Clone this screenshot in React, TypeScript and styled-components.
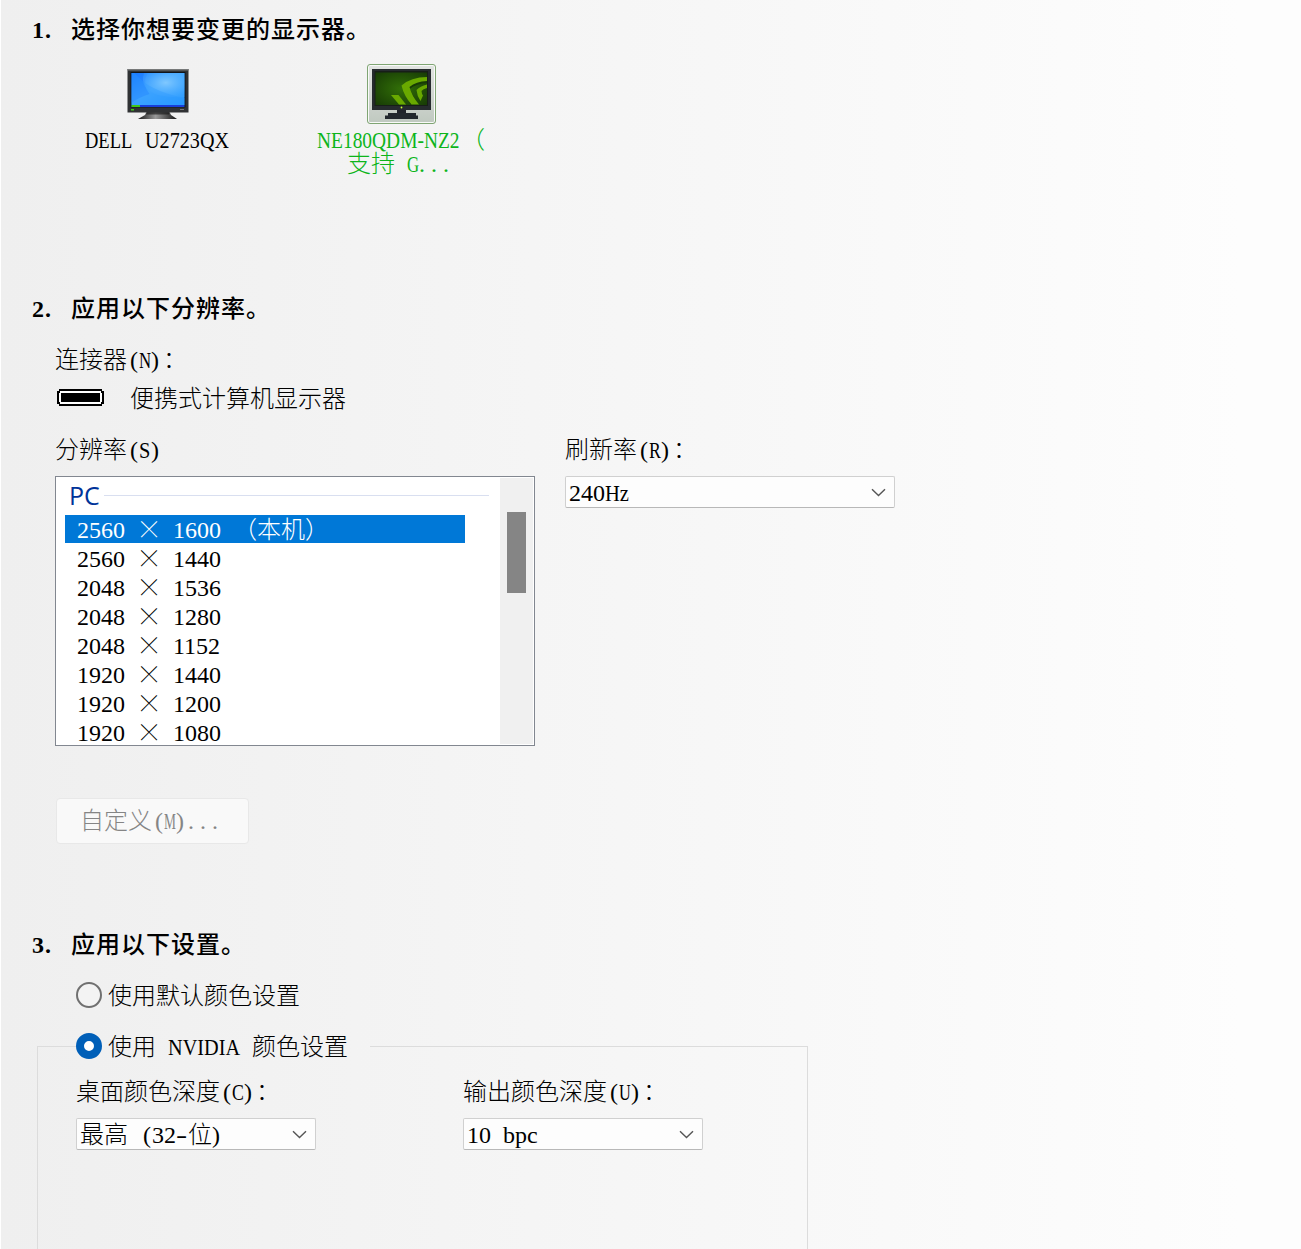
import React, { useState } from "react";
import styled, { createGlobalStyle, css } from "styled-components";

const GlobalStyle = createGlobalStyle`
  * { box-sizing: border-box; }
  body {
    margin: 0;
    background: #f0f0f0;
  }
`;

const Page = styled.main`
  width: 1301px;
  height: 1249px;
  overflow: hidden;
  border-left: 1px solid #fff;
  background: linear-gradient(90deg, #efefef 0, #fdfdfd 1240px);
  color: #000;
  font: 300 24px/24px "Liberation Serif", "Noto Sans CJK SC", serif;
  word-spacing: 6px;
  white-space: nowrap;
`;

const Section = styled.section<{ $height: number; $top?: number }>`
  height: ${(p) => p.$height}px;
  padding-top: ${(p) => p.$top ?? 0}px;
`;

const Heading = styled.h2`
  margin: 0 0 0 31px;
  display: flex;
  font-size: 24px;
  line-height: 26px;
  font-weight: 500;
  letter-spacing: 1px;
`;

const Step = styled.span`
  width: 39px;
  font-weight: 700;
`;

/* Half-width run: every character takes a 12px cell. */
const Half = styled.span<{ $cells: number; $scale?: number; $track?: number; $pad?: number }>`
  display: inline-block;
  width: ${(p) => p.$cells * 12}px;
  padding-left: ${(p) => p.$pad ?? 0}px;
  text-align: left;
  letter-spacing: ${(p) => p.$track ?? 0}px;
  transform: scaleX(${(p) => p.$scale ?? 1});
  transform-origin: 0 50%;
`;

const Displays = styled.div`
  display: flex;
  gap: 76px;
  margin: 21px 0 0 72px;
`;

const Display = styled.div<{ $active?: boolean }>`
  width: 168px;
  display: flex;
  flex-direction: column;
  align-items: center;
  text-align: center;
  color: ${(p) => (p.$active ? "#0db51b" : "#000")};
`;

const Thumb = styled.div<{ $active?: boolean }>`
  width: 69px;
  height: 60px;
  margin-bottom: 4px;
  display: flex;
  justify-content: center;
  padding: 4px 0 0 1px;
  ${(p) =>
    p.$active &&
    css`
      padding: 3px 0 0;
      border: 1px solid #7fa573;
      border-radius: 3px;
      box-shadow: inset 0 0 0 1px #f8faf8;
      background: linear-gradient(#e2e4e2, #c0c9c0);
    `}
`;

const Body = styled.div`
  margin-left: 54px;
`;

const Label = styled.div`
  height: 24px;
`;

const FirstLabel = styled(Label)`
  margin-top: 26px;
`;

const Connector = styled.div`
  display: flex;
  align-items: center;
  height: 24px;
  margin: 15px 0 27px;
`;

const Port = styled.svg`
  width: 47px;
  height: 17px;
  margin: -3px 26px 0 2px;
`;

const Modes = styled.div`
  display: flex;
`;

const ResolutionColumn = styled.div`
  width: 510px;
`;

const ListBox = styled.div`
  width: 480px;
  height: 270px;
  margin-top: 14px;
  border: 1px solid #828790;
  background: #fff;
  display: flex;
  justify-content: space-between;
  overflow: hidden;
`;

const Options = styled.div`
  width: 434px;
  padding: 7px 0 0 9px;
`;

const GroupTitle = styled.div`
  height: 31px;
  display: flex;
  padding-left: 4px;
  color: #003399;
  font: 400 25px/22px "Open Sans", "Noto Sans", sans-serif;

  span {
    width: 35px;
  }

  &::after {
    content: "";
    width: 385px;
    height: 1px;
    margin-top: 11px;
    background: #d9dff0;
  }
`;

const Option = styled.div<{ $selected: boolean }>`
  display: flex;
  width: 400px;
  height: 28px;
  margin-bottom: 1px;
  padding: 1px 0 0 12px;
  line-height: 28px;
  cursor: default;
  color: ${(p) => (p.$selected ? "#fff" : "#000")};
  background: ${(p) => (p.$selected ? "#0078d7" : "transparent")};
`;

const Times = styled.span`
  display: flex;
  justify-content: center;
  width: 24px;
  height: 24px;
  margin: 0 12px;
  font: 100 26px/24px "Noto Sans CJK SC", sans-serif;
`;

const Note = styled.span`
  margin-left: 12px;
`;

const Scrollbar = styled.div`
  width: 33px;
  margin: 1px;
  padding: 34px 7px 0;
  background: #f0f0f0;
`;

const ScrollThumb = styled.div`
  width: 19px;
  height: 81px;
  background: #858585;
`;

const SelectBox = styled.div<{ $width: number }>`
  width: ${(p) => p.$width}px;
  height: 32px;
  margin-top: 14px;
  padding: 0 8px 0 3px;
  display: flex;
  align-items: center;
  justify-content: space-between;
  border: 1px solid #d0d0d0;
  border-bottom-color: #b8b8b8;
  border-radius: 2px;
  background: #fdfdfd;
`;

const Value = styled.span`
  padding-top: 2px;
`;

const CustomButton = styled.button`
  display: block;
  width: 193px;
  height: 46px;
  margin: 52px 0 0 1px;
  padding: 0 0 0 23px;
  text-align: left;
  font: inherit;
  word-spacing: inherit;
  color: #858585;
  background: #f9f9f9;
  border: 1px solid #e8e8e8;
  border-radius: 4px;
`;

const Radio = styled.label`
  display: flex;
  align-items: center;
  height: 26px;
  line-height: 26px;
  gap: 6px;
`;

const RadioText = styled.span`
  padding-top: 1px;
`;

const Dot = styled.span<{ $on: boolean }>`
  width: 26px;
  height: 26px;
  border-radius: 50%;
  background: ${(p) => (p.$on ? "#fff" : "#f3f3f3")};
  border: ${(p) => (p.$on ? "8px solid #005fb8" : "2px solid #707070")};
`;

const DefaultRow = styled.div`
  margin: 24px 0 25px 75px;
`;

const Group = styled.fieldset`
  width: 771px;
  height: 260px;
  min-width: 0;
  margin: 0 0 0 36px;
  padding: 0;
  border: 1px solid #dcdcdc;
`;

const Legend = styled.legend`
  width: 294px;
  margin-left: 38px;
  padding: 0;
`;

const Depths = styled.div`
  display: flex;
  gap: 147px;
  padding: 21px 0 0 38px;
`;

const Depth = styled.div`
  width: 240px;
`;

/* Access key in half-width brackets, e.g. (N). */
const AccessKey = ({ letter, scale }: { letter: string; scale: number }) => (
  <>
    <Half $cells={1} $pad={3}>(</Half>
    <Half $cells={1} $scale={scale}>{letter}</Half>
    <Half $cells={1}>)</Half>
  </>
);

const Arrow = () => (
  <svg width="15" height="9" viewBox="0 0 15 9" fill="none" stroke="#555" strokeWidth="1.4">
    <path d="M1 1.2 7.5 7.5 14 1.2" />
  </svg>
);

const DellMonitor = () => (
  <svg width="62" height="52" viewBox="0 0 62 52">
    <defs>
      <linearGradient id="sky" x1="0" y1="0" x2="1" y2="1">
        <stop offset="0" stopColor="#167cff" />
        <stop offset=".45" stopColor="#46a9ff" />
        <stop offset="1" stopColor="#2498ff" />
      </linearGradient>
      <radialGradient id="glow" cx=".55" cy=".4" r=".65">
        <stop offset="0" stopColor="#80c8ff" />
        <stop offset="1" stopColor="#45a8ff" stopOpacity=".3" />
      </radialGradient>
      <linearGradient id="foot">
        <stop offset="0" stopColor="#171717" />
        <stop offset=".45" stopColor="#999" />
        <stop offset="1" stopColor="#151515" />
      </linearGradient>
    </defs>
    <path d="M20 43h22l2 4 6 4H11l7-4z" fill="url(#foot)" />
    <path d="M20 44h22v2.500H19z" fill="#171717" opacity=".65" />
    <path d="M.5 1h61v43.500H.5z" fill="#303234" />
    <path d="M.5 1h61v1.500H.5z" fill="#777979" />
    <path d="M3.500 4h55v35.500h-55z" fill="#10151c" />
    <path d="M4.500 5h53v32h-53z" fill="url(#sky)" />
    <path d="M4.500 5h16q-6 12 2 21-10 3-18 9z" fill="#1c76ff" opacity=".4" />
    <path d="M17 5h40.500v24Q44 30 31 27 12 21 17 5z" fill="url(#glow)" />
    <path d="M4.500 5h3q14 18 50 25v7h-53z" fill="#2a98ff" opacity=".35" />
    <path d="M4.500 37h53v2h-53z" fill="#183ed8" />
    <path d="M4.500 37h8.500v2h-8.500zM4 41h3v1.500H4z" fill="#3fc818" />
    <path d="M53 41h4v1h-4z" fill="#777" />
  </svg>
);

const NvidiaMonitor = () => (
  <svg width="61" height="53" viewBox="0 0 61 53">
    <defs>
      <radialGradient id="green" cx=".5" cy=".5" r=".7">
        <stop offset="0" stopColor="#326f08" />
        <stop offset="1" stopColor="#173b05" />
      </radialGradient>
      <clipPath id="screen"><path d="M5 4h51v33H5z" /></clipPath>
    </defs>
    <path d="M26 41h9v5h-9z" fill="#20242a" />
    <path d="M17 45h28v2.500h2V51H14v-3.500h3z" fill="#22282d" />
    <path d="M1 1h59v41H1z" fill="#262b2e" />
    <path d="M3.500 3h53.500v35H3.500z" fill="#171e18" />
    <path d="M4.500 4.500h51.500v32.500H4.500z" fill="url(#green)" />
    <g clipPath="url(#screen)">
      <path d="M32 19.500Q42 10.500 57 10.500V15q-11 0-18.500 6l9 16.500H40z" fill="#173b05" />
      <g fill="#69a900">
        <path d="M30.500 17.500Q40 9 56 9v4q-11 .5-17.500 6 2 8.500 9.500 17.500h-7.500Q33 28 30.500 17.500z" />
        <path d="M20 27h7.500l7.500 9.500h-7z" />
        <path d="M45.500 22Q49 18 56 16.500V20q-4 1-5.500 3 .2 3 1.500 4.500L49.500 33Q46 28 45.500 22z" />
      </g>
    </g>
    <circle cx="30.500" cy="39.500" r=".9" fill="#caff35" />
  </svg>
);

const resolutions = [
  { width: "2560", height: "1600", note: "（本机）" },
  { width: "2560", height: "1440" },
  { width: "2048", height: "1536" },
  { width: "2048", height: "1280" },
  { width: "2048", height: "1152" },
  { width: "1920", height: "1440" },
  { width: "1920", height: "1200" },
  { width: "1920", height: "1080" },
];

export default function App() {
  const [selected, setSelected] = useState(0);
  return (
    <>
      <GlobalStyle />
      <Page>
        <Section $height={296} $top={17}>
          <Heading><Step>1.</Step>选择你想要变更的显示器。</Heading>
          <Displays>
            <Display>
              <Thumb><DellMonitor /></Thumb>
              <div>
                <Half $cells={4} $scale={0.77}>DELL</Half> <Half $cells={7} $scale={0.84}>U2723QX</Half>
              </div>
            </Display>
            <Display $active>
              <Thumb $active><NvidiaMonitor /></Thumb>
              <div>
                <Half $cells={12} $scale={0.81}>NE180QDM-NZ2</Half>（
              </div>
              <div>
                支持 <Half $cells={1} $scale={0.7}>G</Half><Half $cells={3} $track={6}>...</Half>
              </div>
            </Display>
          </Displays>
        </Section>

        <Section $height={636}>
          <Heading><Step>2.</Step>应用以下分辨率。</Heading>
          <Body>
            <FirstLabel>连接器<AccessKey letter="N" scale={0.7} />：</FirstLabel>
            <Connector>
              <Port viewBox="0 0 47 17">
                <path d="M2 0h43v2h2v13h-2v2H2v-2H0V2h2z" fill="#000" />
                <path d="M3 2h41v2h1v9h-1v2H3v-2H2V4h1z" fill="#fff" />
                <path d="M4 4h39v9H4z" fill="#000" />
              </Port>
              便携式计算机显示器
            </Connector>
            <Modes>
              <ResolutionColumn>
                <Label>分辨率<AccessKey letter="S" scale={0.85} /></Label>
                <ListBox role="listbox">
                  <Options>
                    <GroupTitle><span>PC</span></GroupTitle>
                    {resolutions.map((mode, i) => (
                      <Option
                        key={mode.width + mode.height}
                        role="option"
                        $selected={i === selected}
                        onClick={() => setSelected(i)}
                      >
                        {mode.width}<Times>×</Times>{mode.height}
                        {mode.note && <Note>{mode.note}</Note>}
                      </Option>
                    ))}
                  </Options>
                  <Scrollbar><ScrollThumb /></Scrollbar>
                </ListBox>
                <CustomButton disabled>
                  自定义<AccessKey letter="M" scale={0.56} /><Half $cells={3} $track={6}>...</Half>
                </CustomButton>
              </ResolutionColumn>
              <div>
                <Label>刷新率<AccessKey letter="R" scale={0.74} />：</Label>
                <SelectBox $width={330}>
                  <Value>240<Half $cells={2} $scale={0.857}>Hz</Half></Value>
                  <Arrow />
                </SelectBox>
              </div>
            </Modes>
          </Body>
        </Section>

        <Section $height={317}>
          <Heading><Step>3.</Step>应用以下设置。</Heading>
          <DefaultRow>
            <Radio><Dot $on={false} /><RadioText>使用默认颜色设置</RadioText></Radio>
          </DefaultRow>
          <Group>
            <Legend>
              <Radio>
                <Dot $on />
                <RadioText>使用 <Half $cells={6} $scale={0.845}>NVIDIA</Half> 颜色设置</RadioText>
              </Radio>
            </Legend>
            <Depths>
              <Depth>
                <Label>桌面颜色深度<AccessKey letter="C" scale={0.74} />：</Label>
                <SelectBox $width={240}>
                  <Value>
                    最高 <Half $cells={1} $pad={3}>(</Half>32<Half $cells={1} $scale={1.4}>-</Half>位)
                  </Value>
                  <Arrow />
                </SelectBox>
              </Depth>
              <Depth>
                <Label>输出颜色深度<AccessKey letter="U" scale={0.68} />：</Label>
                <SelectBox $width={240}>
                  <Value>10 bpc</Value>
                  <Arrow />
                </SelectBox>
              </Depth>
            </Depths>
          </Group>
        </Section>
      </Page>
    </>
  );
}
